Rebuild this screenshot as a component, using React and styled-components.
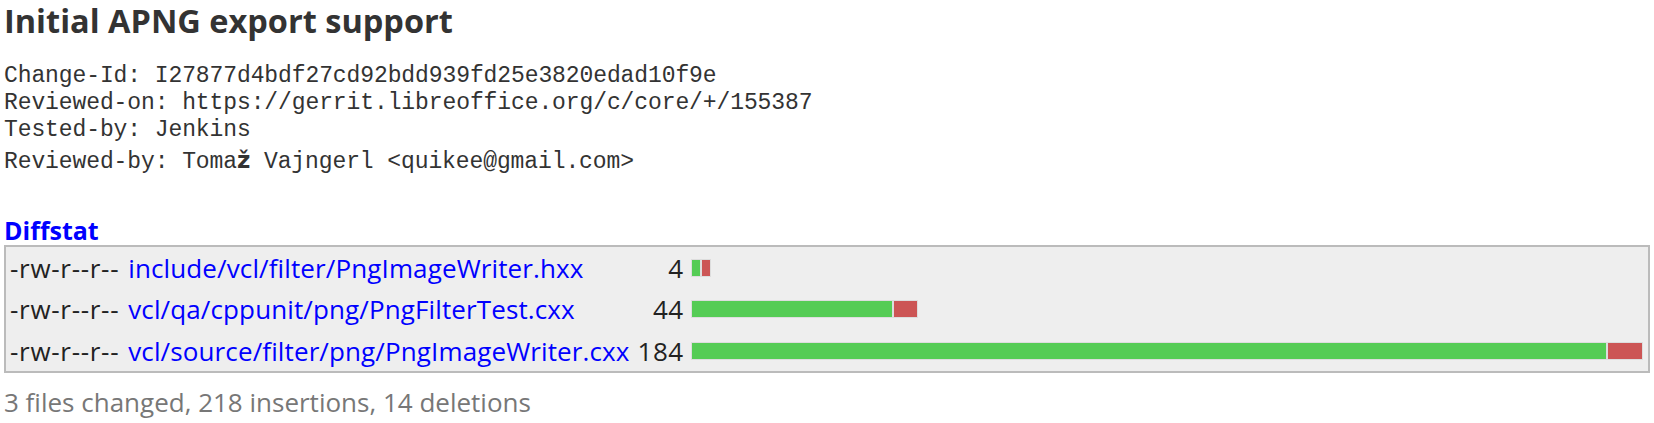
import React from "react";
import styled, { createGlobalStyle } from "styled-components";

const GlobalStyle = createGlobalStyle`
  html, body {
    margin: 0;
    padding: 0;
    background: #fff;
  }
  body {
    font-family: "Open Sans", "Noto Sans", sans-serif;
    color: #333;
  }
`;

const Page = styled.div`
  padding: 0 4px;
`;

const Subject = styled.div`
  font-size: 32.5px;
  font-weight: bold;
  line-height: 42px;
  color: #333;
`;

const Message = styled.div`
  margin-top: 21px;
  font-family: "Liberation Mono", "DejaVu Sans Mono", monospace;
  font-size: 23px;
  letter-spacing: -0.1px;
  color: #333;
  white-space: pre;
`;

const MsgLine = styled.div`
  line-height: ${(p) => (p.$tall ? "32px" : "27px")};
`;

const Accent = styled.span`
  font-family: "DejaVu Sans", sans-serif;
  font-weight: bold;
`;

const DiffstatHeader = styled.a`
  display: block;
  margin-top: 37px;
  font-size: 25px;
  font-weight: bold;
  line-height: 30px;
  color: #00f;
  text-decoration: none;
`;

const DiffTable = styled.table`
  width: 100%;
  border-collapse: collapse;
  border: solid 2px #bbb;
  background: #eee;
  font-size: 26px;
`;

const Row = styled.tr`
  height: 42px;
`;

const Mode = styled.td`
  padding: 0 9px 0 4px;
  letter-spacing: 0.7px;
  white-space: nowrap;
  color: #222;
`;

const FileCell = styled.td`
  padding: 0 8px 0 0;
  letter-spacing: 0.12px;
  white-space: nowrap;
  a {
    color: #00f;
    text-decoration: none;
  }
`;

const Count = styled.td`
  padding: 0 7px 0 0;
  letter-spacing: 0.5px;
  text-align: right;
  white-space: nowrap;
  color: #222;
`;

const Graph = styled.td`
  width: 100%;
  padding: 0 5px 0 0;
`;

const Bars = styled.div`
  display: flex;
  height: 18px;
`;

const Bar = styled.span`
  display: block;
  height: 100%;
  box-sizing: border-box;
  border: solid 1px #ddd;
  background: ${(p) => (p.$kind === "add" ? "#5c5" : "#c55")};
`;

const Summary = styled.div`
  margin-top: 12px;
  font-size: 26px;
  line-height: 34px;
  color: #777;
`;

const files = [
  { path: "include/vcl/filter/PngImageWriter.hxx", add: 2, rem: 2 },
  { path: "vcl/qa/cppunit/png/PngFilterTest.cxx", add: 39, rem: 5 },
  { path: "vcl/source/filter/png/PngImageWriter.cxx", add: 177, rem: 7 },
];

const max = Math.max(...files.map((f) => f.add + f.rem));

export default function App() {
  return (
    <Page>
      <GlobalStyle />
      <Subject>Initial APNG export support</Subject>
      <Message>
        <MsgLine>Change-Id: I27877d4bdf27cd92bdd939fd25e3820edad10f9e</MsgLine>
        <MsgLine>Reviewed-on: https://gerrit.libreoffice.org/c/core/+/155387</MsgLine>
        <MsgLine>Tested-by: Jenkins</MsgLine>
        <MsgLine $tall>
          Reviewed-by: Toma<Accent>ž</Accent> Vajngerl &lt;quikee@gmail.com&gt;
        </MsgLine>
      </Message>
      <DiffstatHeader href="#">Diffstat</DiffstatHeader>
      <DiffTable>
        <tbody>
          {files.map((f) => (
            <Row key={f.path}>
              <Mode>-rw-r--r--</Mode>
              <FileCell>
                <a href="#">{f.path}</a>
              </FileCell>
              <Count>{f.add + f.rem}</Count>
              <Graph>
                <Bars>
                  <Bar $kind="add" style={{ width: `${(f.add / max) * 100}%` }} />
                  <Bar $kind="rem" style={{ width: `${(f.rem / max) * 100}%` }} />
                </Bars>
              </Graph>
            </Row>
          ))}
        </tbody>
      </DiffTable>
      <Summary>3 files changed, 218 insertions, 14 deletions</Summary>
    </Page>
  );
}
